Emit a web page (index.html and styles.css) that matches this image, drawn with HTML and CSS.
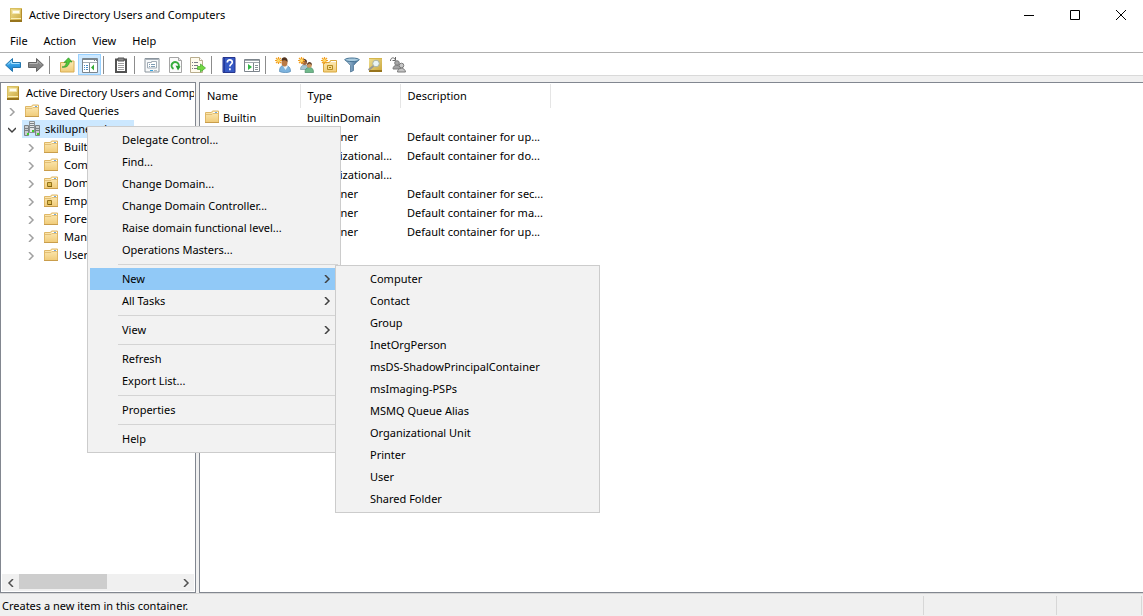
FILE: index.html
```html
<!DOCTYPE html>
<html lang="en">
   <head>
      <meta http-equiv="Content-Type" content="text/html;charset=utf-8" />
      <title>Active Directory Users and Computers</title>
      <link rel="stylesheet" href="styles.css">
   </head>
   <body>
      <!-- shared icons -->
      <svg class="sprites" aria-hidden="true">
         <defs>
            <linearGradient id="gold" x1="0" y1="0" x2="1" y2="1">
               <stop offset="0" stop-color="#f0df90" />
               <stop offset="1" stop-color="#c9a63c" />
            </linearGradient>
            <linearGradient id="paper" x1="0" y1="0" x2="0" y2="1">
               <stop offset="0" stop-color="#fdebb8" />
               <stop offset="1" stop-color="#f0cb78" />
            </linearGradient>
            <linearGradient id="sky" x1="0" y1="0" x2="0" y2="1">
               <stop offset="0" stop-color="#5cc4f8" />
               <stop offset="1" stop-color="#0a78d0" />
            </linearGradient>
            <linearGradient id="steel" x1="0" y1="0" x2="1" y2="0">
               <stop offset="0" stop-color="#b9d4e6" />
               <stop offset="1" stop-color="#2f5f8c" />
            </linearGradient>
         </defs>
         <symbol id="book" viewBox="0 0 16 16">
            <path d="M2 1h12v14H2z" fill="url(#gold)" />
            <path d="M2 1.500h12M2.500 1v14" stroke="#d8bf60" />
            <path d="M13.500 2v13" stroke="#b48d2c" />
            <path d="M3 11.500h10" stroke="#fbefb4" />
            <path d="M2 14h12" stroke="#97741c" stroke-width="2" />
            <path d="M4.500 3.500h7v3h-7z" fill="#fffdf0" stroke="#f2e6ae" />
         </symbol>
         <symbol id="folder" viewBox="0 0 16 16">
            <path d="M1.500 3.500h6l1-1.500h6v11.500h-13z" fill="url(#paper)" stroke="#dfb766" />
            <path d="M9 3.500h5" stroke="#fff" />
            <path d="M11 3.500h2" stroke="#72a8d8" />
            <path d="M2 5.500h6l1-1h5" fill="none" stroke="#e3bf74" />
            <path d="M1 13.500h14" stroke="#c99d4b" />
         </symbol>
         <symbol id="unit" viewBox="0 0 16 16">
            <use href="#folder" />
            <path d="M4.500 7.500h4v4h-4z" fill="#dfbd54" stroke="#96741a" />
            <path d="M5 11.500h4" stroke="#7d5f10" />
         </symbol>
         <symbol id="domain" viewBox="0 0 16 16">
            <path d="M5.500.5h5v11h-5z" fill="#e3e6e8" stroke="#8b9195" />
            <path d="M.5 4.500h4v10h-4zM11.500 4.500h4v10h-4z" fill="#c9cdd0" stroke="#7c8286" />
            <path d="M6 2.500h4M6 4.500h4M6 6.500h4M1 7.500h3M1 9.500h3M12 7.500h3M12 9.500h3" stroke="#7c8286" />
            <path d="M3 12h2v2H3zM8 9h2v2H8zM13 12h2v2h-2z" fill="#42d02c" />
         </symbol>
         <symbol id="chevron" viewBox="0 0 8 8">
            <path d="M2 0l4 4-4 4" fill="none" stroke="currentColor" stroke-width="1.500" />
         </symbol>
         <symbol id="back" viewBox="0 0 16 16">
            <path d="M.6 8l6.900-6.500v4h8v5h-8v4z" fill="url(#sky)" stroke="#2476ad" />
            <path d="M3 7.500L6.500 4v2.500h8" fill="none" stroke="#a7e1ff" />
         </symbol>
         <symbol id="forward" viewBox="0 0 16 16">
            <path d="M15.400 8L8.500 1.500v4h-8v5h8v4z" fill="#858585" stroke="#646464" />
            <path d="M1.500 6.500h8V4L13 7.500" fill="none" stroke="#b7b7b7" />
         </symbol>
         <symbol id="up" viewBox="0 0 16 16">
            <path d="M1.500 5.500h6l1-1.500h6.500v11H1.500z" fill="url(#paper)" stroke="#d9ae54" />
            <path d="M3 10c3 0 4-2 4.500-5L5 5.500 9.500.8 13 5l-2.500-.3C10 9 7 11 3 10z" fill="#52c638" stroke="#2b962a" stroke-width=".7" />
         </symbol>
         <symbol id="pane" viewBox="0 0 16 16">
            <path d="M.5 1.500h15v14H.5z" fill="#fff" stroke="#7b858c" />
            <path d="M1 2.500h14" stroke="#7d878f" />
            <path d="M1 5.500h14" stroke="#a4adb4" />
            <path d="M12 3.500h1M14 3.500h1" stroke="#7b858c" />
            <path d="M7.500 6v9" stroke="#7b858c" />
            <path d="M2 8.500h1M4 8.500h2M2 10.500h1M4 10.500h2M2 12.500h1M4 12.500h2" stroke="#4a8cc4" />
            <path d="M12 7.500v6L9 10.500z" fill="#36ac35" />
         </symbol>
         <symbol id="clipboard" viewBox="0 0 16 16">
            <path d="M3 2.500h10v12.500H3z" fill="#fff" stroke="#535353" stroke-width="2" />
            <path d="M5 1h6v3H5z" fill="#8a8a8a" stroke="#555" />
            <path d="M5 6.500h6M5 8.500h6M5 10.500h6M5 12.500h6" stroke="#a0a0a0" />
         </symbol>
         <symbol id="properties" viewBox="0 0 16 16">
            <path d="M1 1.500h14v13.500H1z" fill="#f7f9fa" stroke="#8b949c" />
            <path d="M1.500 2.500h13" stroke="#a9b2bb" />
            <path d="M3.500 5.500h4v-1h5v6.500h-9z" fill="#fff" stroke="#a1acb6" />
            <path d="M5 7.500h1M7 7.500h4M5 9.500h1M7 9.500h4" stroke="#7f9db4" />
            <path d="M6 13.500h3" stroke="#32a2e0" />
            <path d="M10 13.500h3" stroke="#b5bec5" />
         </symbol>
         <symbol id="refresh" viewBox="0 0 16 16">
            <path d="M2.500.5h9l3 3v12h-12z" fill="#fbfbfb" stroke="#a5a5a5" />
            <path d="M11.500.5v3h3" fill="#e5e5e5" stroke="#a5a5a5" />
            <path d="M6.500 11.800A3.600 3.600 0 1 1 11.500 10" fill="none" stroke="#36ad3d" stroke-width="2" />
            <path d="M8.500 8.500l5 1-2.500 4z" fill="#249c32" />
         </symbol>
         <symbol id="export" viewBox="0 0 16 16">
            <path d="M.5.5h9l3 3v12H.5z" fill="#fffbed" stroke="#b9ad8e" />
            <path d="M9.500.5v3h3" fill="#fff" stroke="#b9ad8e" />
            <path d="M2 5.500h1M2 8.500h1M2 11.500h1M4 5.500h4M4 8.500h4M4 11.500h4" stroke="#7b7b85" />
            <path d="M7.500 9.500h3V7l5 4-5 4v-2.500h-3z" fill="#73d842" stroke="#42a82b" stroke-width=".7" />
         </symbol>
         <symbol id="help" viewBox="0 0 16 16">
            <path d="M2 .5h12v15H2z" fill="#3659c4" stroke="#26358c" />
            <path d="M3.500 1v14" stroke="#243b9c" />
            <path d="M6.300 5.500c0-3.500 5-3.300 5-.3 0 2-2.400 2-2.400 4.300M8.900 11.200v2" fill="none" stroke="#fff" stroke-width="1.700" />
         </symbol>
         <symbol id="play" viewBox="0 0 16 16">
            <path d="M.5 2.500h15v12H.5z" fill="#fff" stroke="#7d858c" />
            <path d="M1 3.500h14M1 5.500h14" stroke="#a0a8ae" />
            <path d="M9.500 6v8" stroke="#7d858c" />
            <path d="M4 7v6l4-3z" fill="#32b846" />
            <path d="M11 8.500h3M11 10.500h3M11 12.500h3" stroke="#8a9299" />
         </symbol>
         <symbol id="spark" viewBox="0 0 16 16">
            <path d="M3.500 0v7M0 3.500h7M1 1l5 5M6 1L1 6" stroke="#f2a023" stroke-width="1.200" />
            <circle cx="3.500" cy="3.500" r="1.500" fill="#ffdc65" />
         </symbol>
         <symbol id="user" viewBox="0 0 16 16">
            <path d="M4.500 14.500c0-4 1.500-6 4-6l2 1.500 2-1c2.500 1 3 3 3 5.500-2 1.500-8 1.500-11 0z" fill="#7db3de" stroke="#5286b3" stroke-width=".7" />
            <path d="M8 9l2.500 4L13 9z" fill="#e9f3fa" />
            <ellipse cx="9.500" cy="5.500" rx="3" ry="4" fill="#b97945" />
            <path d="M6.500 4c-.5-5 7-5 6 1-1.500-2-4-2-6-1z" fill="#51331f" />
            <use href="#spark" />
         </symbol>
         <symbol id="group" viewBox="0 0 16 16">
            <path d="M2.500 12.500c0-3 1.500-4.500 4-4.500s4 1.500 4 4.500z" fill="#a5c3ce" stroke="#7995a0" stroke-width=".7" />
            <circle cx="6.500" cy="5.500" r="2.500" fill="#9e6741" />
            <path d="M4 5c0-4 5-4 5 0L6.500 4z" fill="#503626" />
            <path d="M7 15.500c0-3.500 1.500-5 4.300-5s4.200 1.500 4.200 5z" fill="#6fb98b" stroke="#4b8d66" stroke-width=".7" />
            <circle cx="11.300" cy="8.200" r="2.500" fill="#cd965e" />
            <path d="M9 8c0-4 5-4 5 0l-2.500-1.500z" fill="#60402a" />
            <use href="#spark" />
         </symbol>
         <symbol id="newunit" viewBox="0 0 16 16">
            <path d="M2.500 5.500h6l1-2h6v11.500h-13z" fill="url(#paper)" stroke="#d9a93f" />
            <path d="M10 4.500h5" stroke="#fff" />
            <path d="M6.500 8.500h5v4h-5z" fill="#f7dc87" stroke="#b48a24" />
            <path d="M8 10h2v1H8z" fill="#a87a13" />
            <use href="#spark" />
         </symbol>
         <symbol id="filter" viewBox="0 0 16 16">
            <path d="M1 2.500l5.500 6v6.500l3-1.500v-5l5.500-6z" fill="url(#steel)" stroke="#426b8d" stroke-width=".7" />
            <ellipse cx="8" cy="2.800" rx="7.200" ry="1.800" fill="#aacbdf" stroke="#477495" />
         </symbol>
         <symbol id="find" viewBox="0 0 16 16">
            <path d="M2 1h13v14H2z" fill="url(#gold)" />
            <path d="M2 1.500h13" stroke="#d5b64c" />
            <path d="M2 14h13" stroke="#97741c" stroke-width="2" />
            <circle cx="9" cy="6.500" r="3.300" fill="#eaf5f6" stroke="#a9b3a6" />
            <path d="M6.500 9L1.500 13" stroke="#9a9a94" stroke-width="2" />
         </symbol>
         <symbol id="members" viewBox="0 0 16 16">
            <path d="M.5 4c0-4 4-4 5-1M5.500 0v3.500H2.500" fill="none" stroke="#666" />
            <circle cx="7" cy="6" r="2.300" fill="#a7a7a7" stroke="#7b7b7b" />
            <path d="M3 12c0-5 7-5 8 0z" fill="#a2a2a2" stroke="#7b7b7b" />
            <circle cx="11.500" cy="8.500" r="2.300" fill="#c9c9c9" stroke="#7b7b7b" />
            <path d="M7.500 15c0-5 7.500-5 8 0z" fill="#c4c4c4" stroke="#7b7b7b" />
         </symbol>
      </svg>

      <main class="window">
         <header class="titlebar">
            <svg class="icon"><use href="#book" /></svg>
            <h1>Active Directory Users and Computers</h1>
            <div class="controls">
               <button aria-label="Minimize"><svg viewBox="0 0 12 12"><path d="M1 6.500h10" /></svg></button>
               <button aria-label="Maximize"><svg viewBox="0 0 12 12"><path d="M1.500 1.500h9v9h-9z" /></svg></button>
               <button aria-label="Close"><svg viewBox="0 0 12 12"><path d="M1 1l10 10M11 1L1 11" /></svg></button>
            </div>
         </header>

         <nav class="menubar">
            <button>File</button>
            <button>Action</button>
            <button>View</button>
            <button>Help</button>
         </nav>

         <div class="toolbar">
            <button aria-label="Back"><svg class="icon"><use href="#back" /></svg></button>
            <button aria-label="Forward"><svg class="icon"><use href="#forward" /></svg></button>
            <span class="divider"></span>
            <button aria-label="Up one level"><svg class="icon"><use href="#up" /></svg></button>
            <button class="pressed" aria-label="Show console tree"><svg class="icon"><use href="#pane" /></svg></button>
            <span class="divider"></span>
            <button aria-label="Paste"><svg class="icon"><use href="#clipboard" /></svg></button>
            <span class="divider"></span>
            <button aria-label="Properties"><svg class="icon"><use href="#properties" /></svg></button>
            <button aria-label="Refresh"><svg class="icon"><use href="#refresh" /></svg></button>
            <button aria-label="Export list"><svg class="icon"><use href="#export" /></svg></button>
            <span class="divider"></span>
            <button aria-label="Help"><svg class="icon"><use href="#help" /></svg></button>
            <button aria-label="Show action pane"><svg class="icon"><use href="#play" /></svg></button>
            <span class="divider"></span>
            <button aria-label="New user"><svg class="icon"><use href="#user" /></svg></button>
            <button aria-label="New group"><svg class="icon"><use href="#group" /></svg></button>
            <button aria-label="New organizational unit"><svg class="icon"><use href="#newunit" /></svg></button>
            <button aria-label="Filter"><svg class="icon"><use href="#filter" /></svg></button>
            <button aria-label="Find"><svg class="icon"><use href="#find" /></svg></button>
            <button aria-label="Add to group"><svg class="icon"><use href="#members" /></svg></button>
         </div>

         <div class="panes">
            <section class="tree">
               <ul>
                  <li class="root"><svg class="icon"><use href="#book" /></svg><span>Active Directory Users and Computers</span></li>
                  <li><svg class="arrow"><use href="#chevron" /></svg><svg class="icon"><use href="#folder" /></svg><span>Saved Queries</span></li>
                  <li class="open"><svg class="arrow"><use href="#chevron" /></svg><span class="selected"><svg class="icon"><use href="#domain" /></svg><span>skillupnepal.com</span></span></li>
                  <li class="child"><svg class="arrow"><use href="#chevron" /></svg><svg class="icon"><use href="#folder" /></svg><span>Builtin</span></li>
                  <li class="child"><svg class="arrow"><use href="#chevron" /></svg><svg class="icon"><use href="#folder" /></svg><span>Computers</span></li>
                  <li class="child"><svg class="arrow"><use href="#chevron" /></svg><svg class="icon"><use href="#unit" /></svg><span>Domain Controllers</span></li>
                  <li class="child"><svg class="arrow"><use href="#chevron" /></svg><svg class="icon"><use href="#unit" /></svg><span>Employees</span></li>
                  <li class="child"><svg class="arrow"><use href="#chevron" /></svg><svg class="icon"><use href="#folder" /></svg><span>ForeignSecurityPrincipals</span></li>
                  <li class="child"><svg class="arrow"><use href="#chevron" /></svg><svg class="icon"><use href="#folder" /></svg><span>Managed Service</span></li>
                  <li class="child"><svg class="arrow"><use href="#chevron" /></svg><svg class="icon"><use href="#folder" /></svg><span>Users</span></li>
               </ul>
               <div class="scrollbar">
                  <button class="left" aria-label="Scroll left"><svg><use href="#chevron" /></svg></button>
                  <div class="track"><div class="thumb"></div></div>
                  <button aria-label="Scroll right"><svg><use href="#chevron" /></svg></button>
               </div>
            </section>

            <section class="list">
               <table>
                  <thead>
                     <tr><th class="name">Name</th><th class="type">Type</th><th class="description">Description</th></tr>
                  </thead>
                  <tbody>
                     <tr><td><svg class="icon"><use href="#folder" /></svg>Builtin</td><td>builtinDomain</td><td></td></tr>
                     <tr><td><svg class="icon"><use href="#folder" /></svg>Computers</td><td>Container</td><td>Default container for up...</td></tr>
                     <tr><td><svg class="icon"><use href="#unit" /></svg>Domain Con...</td><td>Organizational...</td><td>Default container for do...</td></tr>
                     <tr><td><svg class="icon"><use href="#unit" /></svg>Employees</td><td>Organizational...</td><td></td></tr>
                     <tr><td><svg class="icon"><use href="#folder" /></svg>ForeignSec...</td><td>Container</td><td>Default container for sec...</td></tr>
                     <tr><td><svg class="icon"><use href="#folder" /></svg>Managed S...</td><td>Container</td><td>Default container for ma...</td></tr>
                     <tr><td><svg class="icon"><use href="#folder" /></svg>Users</td><td>Container</td><td>Default container for up...</td></tr>
                  </tbody>
               </table>
            </section>
         </div>

         <footer class="statusbar">
            <p>Creates a new item in this container.</p>
            <span class="wide"></span>
            <span class="narrow"></span>
         </footer>
      </main>

      <ul class="menu context">
         <li><button>Delegate Control...</button></li>
         <li><button>Find...</button></li>
         <li><button>Change Domain...</button></li>
         <li><button>Change Domain Controller...</button></li>
         <li><button>Raise domain functional level...</button></li>
         <li><button>Operations Masters...</button></li>
         <li class="line"></li>
         <li class="current">
            <button>New<svg><use href="#chevron" /></svg></button>
            <ul class="menu submenu">
               <li><button>Computer</button></li>
               <li><button>Contact</button></li>
               <li><button>Group</button></li>
               <li><button>InetOrgPerson</button></li>
               <li><button>msDS-ShadowPrincipalContainer</button></li>
               <li><button>msImaging-PSPs</button></li>
               <li><button>MSMQ Queue Alias</button></li>
               <li><button>Organizational Unit</button></li>
               <li><button>Printer</button></li>
               <li><button>User</button></li>
               <li><button>Shared Folder</button></li>
            </ul>
         </li>
         <li><button>All Tasks<svg><use href="#chevron" /></svg></button></li>
         <li class="line"></li>
         <li><button>View<svg><use href="#chevron" /></svg></button></li>
         <li class="line"></li>
         <li><button>Refresh</button></li>
         <li><button>Export List...</button></li>
         <li class="line"></li>
         <li><button>Properties</button></li>
         <li class="line"></li>
         <li><button>Help</button></li>
      </ul>
   </body>
</html>
```
FILE: styles.css
```css
* {box-sizing: border-box;}
body {
   margin: 0;
   background: #fff;
   color: #000;
   font: 11px/18px "Noto Sans", "Open Sans", sans-serif;
}
ul, p, h1 {margin: 0; padding: 0; list-style: none;}
button {
   margin: 0;
   padding: 0;
   border: 0;
   background: none;
   color: inherit;
   font: inherit;
}
svg {display: block; flex: none;}
.icon {width: 16px; height: 16px;}
.sprites {position: absolute; width: 0; height: 0;}

.window {display: flex; flex-direction: column; height: 100vh; overflow: hidden;}

/* title bar */
.titlebar {display: flex; align-items: center; flex: none; height: 30px; padding-left: 8px;}
.titlebar h1 {flex: 1; margin-left: 5px; font-size: 11px; font-weight: normal;}
.controls {display: flex; margin-right: -1px;}
.controls button {display: flex; align-items: center; justify-content: center; width: 46px; height: 30px;}
.controls svg {width: 12px; height: 12px; fill: none; stroke: #000;}

.menubar {display: flex; flex: none; gap: 16px; height: 22px; padding-left: 10px;}

/* toolbar */
.toolbar {
   display: flex;
   align-items: center;
   flex: none;
   height: 24px;
   padding: 1px 0 0 1px;
   border-top: 1px solid #b0b0b0;
   border-bottom: 1px solid #d9d9d9;
}
.toolbar button {display: flex; align-items: center; justify-content: center; width: 23px; height: 21px;}
.toolbar svg {margin-top: 1px;}
.toolbar .pressed {background: #cce8ff; border: 1px solid #99d1ff;}
.divider {width: 1px; height: 18px; margin: 0 5px 0 2px; background: #8c8c8c;}

/* panes */
.panes {display: flex; flex: 1; gap: 3px; min-height: 0; padding-top: 6px; background: #f0f0f0;}
.tree, .list {background: #fff; border: 1px solid #828790;}
.tree {display: flex; flex-direction: column; flex: none; width: 196px; padding: 1px;}
.tree ul {flex: 1; overflow: hidden;}
.tree li {display: flex; align-items: center; height: 18px; padding-left: 6px; white-space: nowrap;}
.tree li .icon {margin: 0 5px 0 8px;}
.tree .root {padding-left: 3px;}
.tree .root .icon {margin-left: 0;}
.tree .child {padding-left: 25px;}
.arrow {width: 8px; height: 8px; margin-top: 2px; color: #a0a0a0;}
.open .arrow {color: #404040; transform: rotate(90deg);}
.selected {display: flex; align-items: center; height: 18px; margin-left: 6px; padding-right: 2px; background: #cce8ff;}
.tree .selected .icon {margin-left: 2px;}
.scrollbar {display: flex; flex: none; height: 17px; background: #f0f0f0; color: #505050;}
.scrollbar button {display: flex; align-items: center; justify-content: center; width: 17px;}
.scrollbar svg {width: 8px; height: 8px;}
.scrollbar .left svg {transform: rotate(180deg);}
.track {flex: 1; padding-bottom: 2px;}
.thumb {width: 56%; height: 100%; background: #cdcdcd;}

.list {flex: 1; border-right: 0; padding-top: 1px;}
table {border-collapse: collapse; table-layout: fixed; width: 351px;}
th, td {padding: 0 0 0 7px; text-align: left; font-weight: normal; white-space: nowrap;}
th {height: 24px; border-right: 1px solid #e5e5e5;}
td {height: 19px;}
td:first-child {padding-left: 4px;}
td .icon {display: inline-block; margin-right: 3px; vertical-align: -3px;}
.name, .type {width: 100px;}

/* status bar */
.statusbar {display: flex; flex: none; height: 23px; padding: 2px 1px 1px 2px; border-top: 1px solid #d7d7d7; background: #f0f0f0;}
.statusbar p {flex: 1; line-height: 20px;}
.statusbar span {border-left: 1px solid #d7d7d7;}
.wide {width: 133px;}
.narrow {width: 86px; border-right: 1px solid #d7d7d7;}

/* popup menus */
.menu {position: absolute; padding: 2px; border: 1px solid #ccc; background: #f2f2f2;}
.context {left: 87px; top: 126px; width: 254px;}
.submenu {left: 245px; top: -3px; width: 265px;}
.menu li {height: 22px;}
.menu button {display: flex; align-items: center; justify-content: space-between; width: 100%; height: 22px; padding: 0 7px 0 32px; text-align: left;}
.context svg {width: 8px; height: 8px; color: #404040;}
.menu .line {height: 7px; padding: 3px 0 3px 28px;}
.line::before {content: ""; display: block; height: 1px; background: #d4d4d4;}
.menu .current {position: relative;}
.current > button {background: #91c9f7;}
```
